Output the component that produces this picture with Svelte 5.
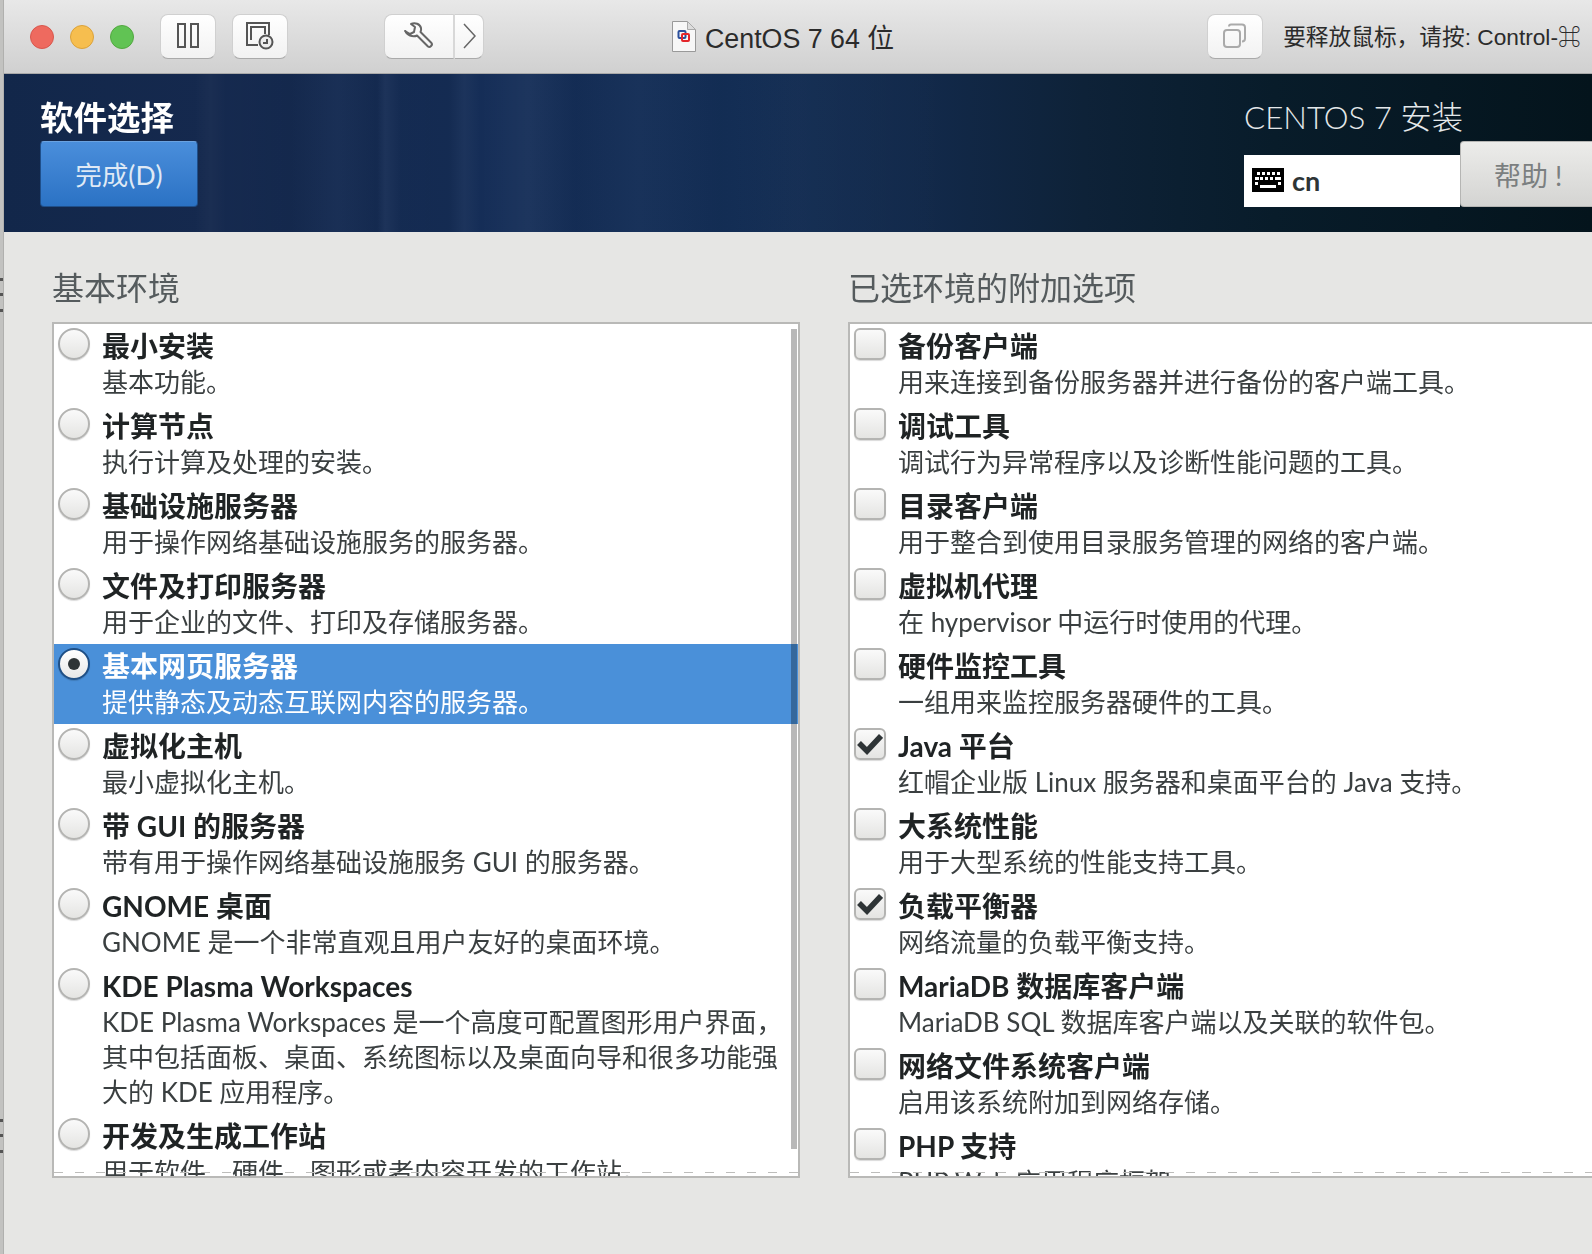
<script>
    const envs = [
        { title: '最小安装', desc: '基本功能。' },
        { title: '计算节点', desc: '执行计算及处理的安装。' },
        { title: '基础设施服务器', desc: '用于操作网络基础设施服务的服务器。' },
        { title: '文件及打印服务器', desc: '用于企业的文件、打印及存储服务器。' },
        { title: '基本网页服务器', desc: '提供静态及动态互联网内容的服务器。', selected: true },
        { title: '虚拟化主机', desc: '最小虚拟化主机。' },
        { title: '带 GUI 的服务器', desc: '带有用于操作网络基础设施服务 GUI 的服务器。' },
        { title: 'GNOME 桌面', desc: 'GNOME 是一个非常直观且用户友好的桌面环境。' },
        {
            title: 'KDE Plasma Workspaces',
            desc: 'KDE Plasma Workspaces 是一个高度可配置图形用户界面，\n其中包括面板、桌面、系统图标以及桌面向导和很多功能强\n大的 KDE 应用程序。'
        },
        { title: '开发及生成工作站', desc: '用于软件、硬件、图形或者内容开发的工作站。' }
    ];

    const addons = [
        { title: '备份客户端', desc: '用来连接到备份服务器并进行备份的客户端工具。' },
        { title: '调试工具', desc: '调试行为异常程序以及诊断性能问题的工具。' },
        { title: '目录客户端', desc: '用于整合到使用目录服务管理的网络的客户端。' },
        { title: '虚拟机代理', desc: '在 hypervisor 中运行时使用的代理。' },
        { title: '硬件监控工具', desc: '一组用来监控服务器硬件的工具。' },
        { title: 'Java 平台', desc: '红帽企业版 Linux 服务器和桌面平台的 Java 支持。', checked: true },
        { title: '大系统性能', desc: '用于大型系统的性能支持工具。' },
        { title: '负载平衡器', desc: '网络流量的负载平衡支持。', checked: true },
        { title: 'MariaDB 数据库客户端', desc: 'MariaDB SQL 数据库客户端以及关联的软件包。' },
        { title: '网络文件系统客户端', desc: '启用该系统附加到网络存储。' },
        { title: 'PHP 支持', desc: 'PHP Web 应用程序框架。' }
    ];
</script>

<div class="edge top"></div>
<div class="edge low"></div>

<div class="window">
    <div class="titlebar">
        <div class="lights">
            <span class="light red"></span>
            <span class="light yellow"></span>
            <span class="light green"></span>
        </div>
        <button class="tool pause" aria-label="pause">
            <svg width="22" height="26" viewBox="0 0 22 26" fill="none" stroke="#555" stroke-width="2"><rect x="1" y="1" width="7" height="23"/><rect x="14" y="1" width="7" height="23"/></svg>
        </button>
        <button class="tool snap" aria-label="snapshot">
            <svg width="30" height="30" viewBox="0 0 30 30" fill="none" stroke="#555" stroke-width="2"><path d="M13 24H2V2h22v12"/><path d="M6 19V6h14v7"/><circle cx="21" cy="21" r="6.5" fill="#eee"/><path d="M22 18v4h-4"/></svg>
        </button>
        <div class="split">
            <button class="tool wrench" aria-label="settings">
                <svg width="30" height="30" viewBox="0 0 30 30" fill="none" stroke="#666" stroke-width="2" stroke-linejoin="round"><path d="M1 10l5 3 4-2 1-5-4-3c4-2 9 0 10 4 .3 1.500 0 3-.5 4l11 11c1.500 2-1.500 5-3.500 3.500l-11-11c-4 2-11-.5-11.500-4.500z"/></svg>
            </button>
            <button class="tool more" aria-label="more">
                <svg width="13" height="26" viewBox="0 0 13 26" fill="none" stroke="#666" stroke-width="1.500"><path d="M1 1l11 12L1 25"/></svg>
            </button>
        </div>
        <div class="doc">
            <svg width="24" height="31" viewBox="0 0 24 31">
                <path d="M.5.500h15l8 8v22H.5z" fill="#f7f7f7" stroke="#999"/>
                <path d="M15.500.500v8h8z" fill="#ddd" stroke="#aaa"/>
                <rect x="6.500" y="10" width="7" height="7" rx="1" fill="none" stroke="#2b4f9c" stroke-width="2"/>
                <rect x="10" y="13" width="7" height="7" rx="1" fill="none" stroke="#e3262b" stroke-width="2"/>
            </svg>
            <span>CentOS 7 64 位</span>
        </div>
        <button class="tool copy" aria-label="fullscreen">
            <svg width="24" height="26" viewBox="0 0 24 26" fill="none" stroke="#aaa" stroke-width="2"><rect x="1" y="7" width="16" height="17" rx="3"/><path d="M6 3.500c0-1 1-2 2-2h11c2 0 3 1 3 3v11c0 2-1 3-3 3"/></svg>
        </button>
        <div class="hint">要释放鼠标，请按: Control-⌘</div>
    </div>

    <header class="banner">
        <div class="banner-left">
            <h1>软件选择</h1>
            <button class="done">完成(D)</button>
        </div>
        <div class="banner-right">
            <div class="product">CENTOS 7 安装</div>
            <div class="kb-row">
                <div class="kb">
                    <svg width="32" height="24" viewBox="0 0 32 24">
                        <rect width="32" height="24" fill="#000"/>
                        <g fill="#fff">
                            <rect x="5" y="4" width="3" height="3"/><rect x="10" y="4" width="3" height="3"/><rect x="15" y="4" width="3" height="3"/><rect x="20" y="4" width="3" height="3"/><rect x="25" y="4" width="3" height="3"/>
                            <rect x="3" y="9" width="4" height="3"/><rect x="8" y="9" width="3" height="3"/><rect x="13" y="9" width="3" height="3"/><rect x="18" y="9" width="3" height="3"/><rect x="23" y="9" width="6" height="3"/>
                            <rect x="3" y="14" width="3" height="3"/><rect x="8" y="17" width="16" height="3"/><rect x="26" y="14" width="3" height="3"/>
                        </g>
                    </svg>
                    <span>cn</span>
                </div>
                <button class="help">帮助 !</button>
            </div>
        </div>
    </header>

    <main class="spoke">
        <section class="col col-left">
            <h2>基本环境</h2>
            <div class="panel">
                <div class="list">
                    {#each envs as item}
                        <div class="row" class:selected={item.selected}>
                            <span class="radio" class:on={item.selected}></span>
                            <div class="text">
                                <div class="title">{item.title}</div>
                                <div class="desc">{item.desc}</div>
                            </div>
                        </div>
                    {/each}
                </div>
                <div class="scrollbar"></div>
                <div class="dashes"></div>
            </div>
        </section>
        <section class="col col-right">
            <h2>已选环境的附加选项</h2>
            <div class="panel">
                <div class="list">
                    {#each addons as item}
                        <div class="row">
                            <span class="check">
                                {#if item.checked}
                                    <svg width="26" height="22" viewBox="0 0 26 22" fill="none" stroke="#2e3436" stroke-width="5.500"><path d="M2 10l8 8L24 3"/></svg>
                                {/if}
                            </span>
                            <div class="text">
                                <div class="title">{item.title}</div>
                                <div class="desc">{item.desc}</div>
                            </div>
                        </div>
                    {/each}
                </div>
                <div class="dashes"></div>
            </div>
        </section>
    </main>
</div>

<style>
    :global(body) {
        margin: 0;
        background: #c2c2c0;
        font-family: Lato, "Noto Sans CJK SC", sans-serif;
        color: #2e3436;
    }

    /* bits of the window behind, showing along the left edge */
    .edge {
        position: absolute;
        left: 0;
        width: 3px;
        height: 40px;
        background: linear-gradient(#555 0 3px, transparent 3px 15px, #555 15px 18px, transparent 18px 31px, #555 31px 34px, transparent 34px);
    }
    .edge.top { top: 278px; }
    .edge.low { top: 1119px; }

    .window {
        width: 1589px;
        height: 1254px;
        margin-left: 3px;
        border-left: 1px solid #b0b0ae;
        box-sizing: border-box;
        display: flex;
        flex-direction: column;
        overflow: hidden;
        background: #e6e6e4;
    }

    .titlebar {
        height: 74px;
        flex: none;
        box-sizing: border-box;
        border-bottom: 1px solid #a9a9a9;
        background: linear-gradient(#e8e8e8, #d0d0d0);
        display: flex;
        align-items: center;
        font-family: "Liberation Sans", "Noto Sans CJK SC", sans-serif;
    }

    .lights {
        display: flex;
        gap: 16px;
        margin-left: 26px;
        margin-right: 26px;
    }

    .light {
        width: 24px;
        height: 24px;
        border-radius: 50%;
        box-sizing: border-box;
    }
    .red { background: #ee6a5f; border: 1px solid #d8574d; }
    .yellow { background: #f6be4f; border: 1px solid #dba23a; }
    .green { background: #61c354; border: 1px solid #52a840; }

    button {
        font-family: inherit;
        padding: 0;
    }

    .tool {
        height: 45px;
        width: 56px;
        margin-bottom: 1px;
        border: 1px solid #d0d0d0;
        border-bottom-color: #aaa;
        border-radius: 8px;
        background: linear-gradient(#fff, #f2f2f2);
        display: flex;
        align-items: center;
        justify-content: center;
        box-sizing: border-box;
    }

    .snap { margin-left: 16px; }

    .split {
        display: flex;
        margin-left: 96px;
    }
    .wrench {
        width: 71px;
        border-radius: 8px 0 0 8px;
        border-right: 2px solid #d8d8d8;
    }
    .more {
        width: 29px;
        border-radius: 0 8px 8px 0;
        border-left: none;
    }

    .doc {
        display: flex;
        align-items: center;
        gap: 9px;
        margin-left: 188px;
        font-size: 26.800px;
        color: #2b2b2b;
    }

    .copy {
        margin-left: 313px;
    }

    .hint {
        margin-left: 20px;
        padding-bottom: 3px;
        font-size: 22.700px;
        color: #2b2b2b;
        white-space: nowrap;
    }

    .banner {
        height: 158px;
        flex: none;
        display: flex;
        justify-content: space-between;
        background:
            linear-gradient(90deg,
                rgba(255, 255, 255, 0) 12%, rgba(255, 255, 255, 0.025) 13%, rgba(255, 255, 255, 0) 14%,
                rgba(0, 0, 0, 0.05) 18%, rgba(255, 255, 255, 0.02) 21%, rgba(0, 0, 0, 0.05) 23.500%,
                rgba(255, 255, 255, 0.035) 24%, rgba(0, 0, 0, 0.03) 25%, rgba(0, 0, 0, 0.05) 28%,
                rgba(255, 255, 255, 0.03) 29%, rgba(255, 255, 255, 0) 30%, rgba(255, 255, 255, 0.035) 33%,
                rgba(0, 0, 0, 0.04) 36%, rgba(255, 255, 255, 0.02) 40%, rgba(0, 0, 0, 0.03) 45%,
                rgba(255, 255, 255, 0.015) 50%, rgba(0, 0, 0, 0) 60%),
            linear-gradient(90deg, #12274a 0%, #15294e 13%, #152e58 32%, #132e56 46%, #12294a 58%, #0e2238 68%, #081c2a 80%, #04141c 100%);
    }

    .banner-left {
        margin-left: 36px;
        display: flex;
        flex-direction: column;
    }

    h1 {
        margin: 22px 0 2px;
        font-size: 33.500px;
        line-height: 43px;
        font-weight: 700;
        color: #fff;
        filter: blur(0.4px);
    }

    .done {
        width: 158px;
        height: 66px;
        box-sizing: border-box;
        border: 1px solid #1f4f8a;
        border-top-color: #6aa2e0;
        border-radius: 4px;
        background: linear-gradient(#4a8edb, #2b72c4);
        color: #dfe9f5;
        font-size: 26.500px;
        padding-bottom: 2px;
    }

    .banner-right {
        width: 348px;
        flex: none;
        display: flex;
        flex-direction: column;
    }

    .product {
        margin: 21px 0 2px;
        font-size: 31.300px;
        line-height: 44px;
        color: #e4e8ea;
        font-weight: 300;
    }

    .kb-row {
        display: flex;
        align-items: flex-end;
    }

    .kb {
        width: 216px;
        height: 52px;
        background: #fff;
        display: flex;
        align-items: center;
        gap: 8px;
        padding: 0 0 2px 8px;
        box-sizing: border-box;
        color: #2e3436;
        font-weight: 700;
        font-size: 27px;
    }

    .help {
        width: 132px;
        height: 66px;
        flex: none;
        box-sizing: border-box;
        border: 1px solid #b5b5b3;
        border-right: none;
        border-radius: 4px 0 0 4px;
        background: linear-gradient(#ececea, #d4d4d2);
        color: #7b7f80;
        font-size: 27px;
        text-align: left;
        padding-left: 33px;
    }

    .spoke {
        flex: 1;
        display: flex;
        min-height: 0;
        padding: 35px 0 0 48px;
    }

    .col {
        display: flex;
        flex-direction: column;
        flex: none;
    }
    .col-left { width: 748px; }
    .col-right { width: 760px; margin-left: 48px; }

    h2 {
        margin: 0 0 14px;
        font-size: 32px;
        line-height: 41px;
        font-weight: 400;
        color: #555b5d;
        filter: blur(0.3px);
    }

    .panel {
        position: relative;
        height: 856px;
        box-sizing: border-box;
        border: 2px solid #b9b9b7;
        background: #fff;
        overflow: hidden;
    }

    .row {
        display: flex;
        padding-left: 4px;
    }

    .radio, .check {
        flex: none;
        width: 32px;
        height: 32px;
        margin-top: 4px;
        box-sizing: border-box;
        border: 2px solid #b4b4b2;
        background: linear-gradient(#fafafa, #e4e4e2);
        box-shadow: 0 1px 1px rgba(0, 0, 0, 0.15);
    }

    .radio {
        border-radius: 50%;
        display: flex;
        align-items: center;
        justify-content: center;
    }
    .radio.on {
        border-color: #1f4f85;
        background: linear-gradient(#fff, #e8e8e8);
    }
    .radio.on::after {
        content: "";
        width: 12px;
        height: 12px;
        border-radius: 50%;
        background: #2e3436;
    }

    .check {
        border-radius: 6px;
        display: flex;
        align-items: center;
        justify-content: center;
    }

    .text {
        margin-left: 12px;
        padding-top: 3px;
        padding-bottom: 4px;
        filter: blur(0.35px);
    }

    .title {
        font-size: 28px;
        line-height: 38px;
        font-weight: 700;
        color: #1f2324;
        white-space: nowrap;
    }

    .desc {
        font-size: 26px;
        line-height: 35px;
        color: #3a3f40;
        white-space: pre-line;
    }

    .selected {
        background: #4a90d9;
    }
    .selected .title, .selected .desc {
        color: #fff;
    }

    .scrollbar {
        position: absolute;
        right: 1px;
        top: 5px;
        width: 6px;
        height: 820px;
        background: rgba(0, 0, 0, 0.28);
    }

    .dashes {
        position: absolute;
        left: 0;
        right: 0;
        bottom: 3px;
        height: 1px;
        background: repeating-linear-gradient(90deg, #bdbdbb 0 9px, transparent 9px 21px);
    }
</style>
